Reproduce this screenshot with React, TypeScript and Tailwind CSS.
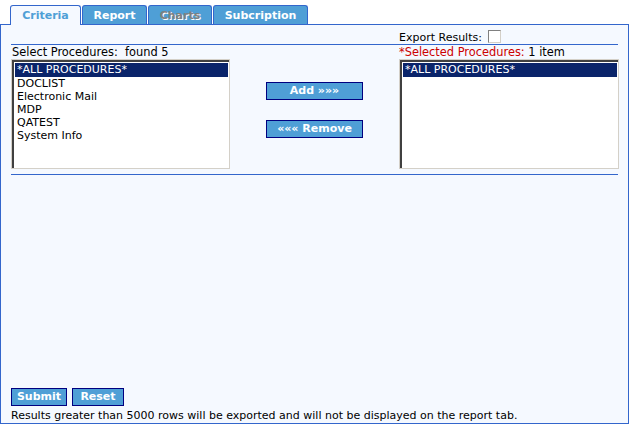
import { useState } from 'react';

const procedures = ['*ALL PROCEDURES*', 'DOCLIST', 'Electronic Mail', 'MDP', 'QATEST', 'System Info'];

const tabs = [
  { label: 'Criteria', w: 'w-[71px]' },
  { label: 'Report', w: 'w-[65px]' },
  { label: 'Charts', w: 'w-[64px]' },
  { label: 'Subcription', w: 'w-[95px]' },
];

function ListBox({ items, selected }: { items: string[]; selected: string }) {
  return (
    <div className="h-[110px] border border-[#d4d0c8] bg-white">
      <div className="h-full border-t-2 border-l-2 border-t-[#404040] border-l-[#404040] pt-[1px] pr-px pl-px">
        {items.map((item, i) => (
          <div
            key={item}
            className={`pl-[2px] text-[11px] ${i === 0 ? 'h-[14px] leading-[14px]' : 'h-[13px] leading-[13px]'} ${
              item === selected ? 'bg-[#0a246a] text-white' : 'text-black'
            }`}
          >
            {item}
          </div>
        ))}
      </div>
    </div>
  );
}

function BlueButton({ children, className = '' }: { children: React.ReactNode; className?: string }) {
  return (
    <button
      className={`h-[18px] border border-[#000080] bg-[#4f9fd6] text-[11px] font-bold leading-[16px] text-white ${className}`}
    >
      {children}
    </button>
  );
}

export default function App() {
  const [active] = useState('Criteria');
  const [exportResults, setExportResults] = useState(false);

  return (
    <div className="h-[430px] w-[635px] bg-white font-['DejaVu_Sans',sans-serif] text-black">
      {/* Tabs */}
      <div className="flex h-[24px] items-end gap-px pl-[10px]">
        {tabs.map((tab) => {
          const isActive = tab.label === active;
          const isDisabled = tab.label === 'Charts';
          return (
            <div
              key={tab.label}
              className={`relative flex items-center justify-center rounded-t-[3px] border border-b-0 border-[#3366cc] pt-[2px] text-[11px] font-bold ${tab.w} ${
                isActive
                  ? 'z-10 -mb-px h-[20px] bg-[#f5f9ff] text-[#4f9fd6]'
                  : isDisabled
                  ? 'h-[19px] bg-[#4f9fd6] text-[#808080] [text-shadow:1px_1px_0_#ffffff]'
                  : 'h-[19px] bg-[#4f9fd6] text-white'
              }`}
            >
              {tab.label}
            </div>
          );
        })}
      </div>

      {/* Panel */}
      <div className="flex h-[400px] w-[629px] flex-col border border-[#3366cc] bg-[#f5f9ff] pl-[10px]">
        <div className="flex h-[19px] items-end pl-[388px] text-[11px]">
          <span className="leading-[13px]">Export Results:</span>
          <input
            type="checkbox"
            checked={exportResults}
            onChange={(e) => setExportResults(e.target.checked)}
            className="mb-[1px] ml-[6px] h-[13px] w-[13px] appearance-none border border-t-[#808080] border-l-[#808080] border-b-[#d4d0c8] border-r-[#d4d0c8] bg-white"
          />
        </div>
        <div className="w-[607px] border-t border-[#3366cc]" />

        <div className="grid grid-cols-[219px_169px_220px]">
          <div>
            <div className="h-[14px] pl-px text-[11.4px] leading-[14px]">Select Procedures:&nbsp; found 5</div>
            <ListBox items={procedures} selected="*ALL PROCEDURES*" />
          </div>
          <div className="flex flex-col items-center px-[36px] pt-[37px]">
            <BlueButton className="w-[97px]">Add &#187;&#187;&#187;</BlueButton>
            <BlueButton className="mt-[20px] w-[97px]">&#171;&#171;&#171; Remove</BlueButton>
          </div>
          <div>
            <div className="h-[14px] text-[11.4px] leading-[14px]">
              <span className="text-[#cc0000]">*Selected Procedures:</span> 1 item
            </div>
            <ListBox items={['*ALL PROCEDURES*']} selected="*ALL PROCEDURES*" />
          </div>
        </div>

        <div className="mt-[5px] w-[607px] border-t border-[#3366cc]" />

        <div className="mt-auto flex gap-[5px]">
          <BlueButton className="w-[56px]">Submit</BlueButton>
          <BlueButton className="w-[52px]">Reset</BlueButton>
        </div>
        <div className="mt-[3px] mb-[1px] text-[11px] leading-[13px]">
          Results greater than 5000 rows will be exported and will not be displayed on the report tab.
        </div>
      </div>
    </div>
  );
}
